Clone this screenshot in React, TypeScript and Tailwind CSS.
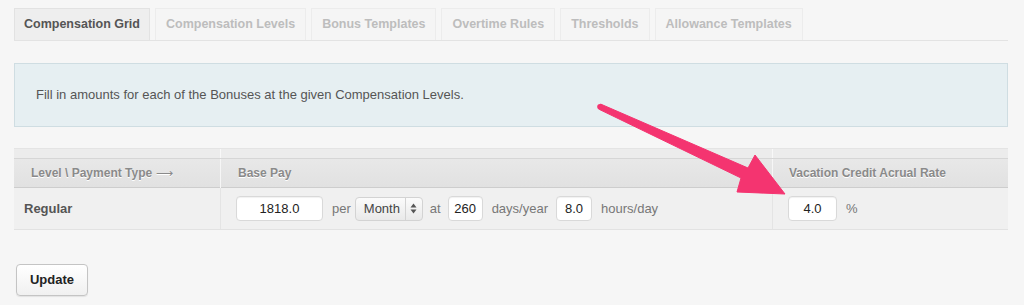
import React from "react";

const tabs = [
  "Compensation Grid",
  "Compensation Levels",
  "Bonus Templates",
  "Overtime Rules",
  "Thresholds",
  "Allowance Templates",
];

const field =
  "h-[25px] rounded-[4px] border border-[#d9d9d9] bg-white text-center text-[13px] text-[#222] shadow-[inset_0_1px_1px_rgba(0,0,0,0.06)] outline-none";

// Skitch-style pink arrow pointing at the vacation rate input
function Arrow() {
  return (
    <svg className="pointer-events-none absolute left-0 top-0" width="1024" height="305" viewBox="0 0 1024 305">
      <polygon
        points="600.5,104 748,168 755,155 785,194 737,192 741,178 599.5,109.5"
        fill="#f43470"
        stroke="#f43470"
        strokeWidth="1"
        strokeLinejoin="round"
      />
      <circle cx="600" cy="106.8" r="2.8" fill="#f43470" />
    </svg>
  );
}

export default function App() {
  return (
    <div className="relative h-[305px] w-[1024px] overflow-hidden bg-[#f6f6f6] pl-[14px] pr-[16px] pt-[8px] font-['Liberation_Sans',Arial,sans-serif]">
      {/* tabs */}
      <div className="flex gap-[5px] border-b border-[#e3e3e3]">
        {tabs.map((t, i) => (
          <div
            key={t}
            className={
              "h-[32px] border border-b-0 text-[12.5px] font-bold leading-[31px] " +
              (i === 0
                ? "border-[#e2e2e2] bg-[#eeeeee] px-[9px] text-[#555]"
                : "border-[#ececec] bg-[#f5f5f5] px-[10px] text-[#bdbdbd]")
            }
          >
            {t}
          </div>
        ))}
      </div>

      {/* info box */}
      <div className="mt-[22px] flex h-[64px] items-center border border-[#cfdde2] bg-[#e6eff2] pl-[21px] text-[13px] text-[#555]">
        Fill in amounts for each of the Bonuses at the given Compensation Levels.
      </div>

      {/* grid */}
      <div className="mt-[21px]">
        <div className="grid h-[10px] grid-cols-[207px_552px_1fr] border-t border-[#e4e4e4] bg-[#ececec]">
          <div className="border-r border-[#f8f8f8]" />
          <div className="border-r border-[#f8f8f8]" />
          <div />
        </div>
        <div className="grid h-[30px] grid-cols-[207px_552px_1fr] border-b border-[#cdcdcd] border-t border-t-[#d6d6d6] bg-gradient-to-b from-[#e8e8e8] to-[#e1e1e1] text-[12px] font-bold text-[#8a8a8a] [text-shadow:0_1px_0_#fff]">
          <div className="border-r border-[#f6f6f6] pl-[17px] leading-[29px]">
            Level \ Payment Type <span className="font-normal">⟶</span>
          </div>
          <div className="border-r border-[#f6f6f6] pl-[17px] leading-[29px]">Base Pay</div>
          <div className="pl-[16px] leading-[29px]">Vacation Credit Acrual Rate</div>
        </div>
        <div className="grid h-[42px] grid-cols-[207px_552px_1fr] border-b border-[#e2e2e2] bg-[#f0f0f0] text-[13px] text-[#777]">
          <div className="flex items-center border-r border-[#e4e4e4] pl-[10px] font-bold text-[#555]">Regular</div>
          <div className="flex items-center border-r border-[#e4e4e4] pl-[15px]">
            <input className={field + " w-[87px]"} defaultValue="1818.0" />
            <span className="ml-[9px]">per</span>
            <div className="ml-[4px] flex h-[24px] w-[68px] items-center rounded-[4px] border border-[#d3d3d3] bg-gradient-to-b from-[#fbfbfb] to-[#e9e9e9] text-[#444]">
              <span className="flex-1 pl-[8px]">Month</span>
              <span className="flex h-full w-[17px] flex-col items-center justify-center border-l border-[#d3d3d3]">
                <svg width="7" height="11" viewBox="0 0 7 11">
                  <path d="M3.5 0.5 L6.5 4.5 L0.5 4.5 Z" fill="#555" />
                  <path d="M3.5 10.5 L6.5 6.5 L0.5 6.5 Z" fill="#555" />
                </svg>
              </span>
            </div>
            <span className="ml-[7px]">at</span>
            <input className={field + " ml-[7px] w-[35px]"} defaultValue="260" />
            <span className="ml-[9px]">days/year</span>
            <input className={field + " ml-[8px] w-[36px]"} defaultValue="8.0" />
            <span className="ml-[9px]">hours/day</span>
          </div>
          <div className="flex items-center pl-[15px]">
            <input className={field + " w-[49px]"} defaultValue="4.0" />
            <span className="ml-[9px]">%</span>
          </div>
        </div>
      </div>

      <button className="ml-[2px] mt-[34px] h-[32px] w-[72px] rounded-[4px] border border-[#c4c4c4] bg-gradient-to-b from-white to-[#f0f0f0] text-[13px] font-bold text-[#222] shadow-[0_1px_1px_rgba(0,0,0,0.08)]">
        Update
      </button>

      <Arrow />
    </div>
  );
}
